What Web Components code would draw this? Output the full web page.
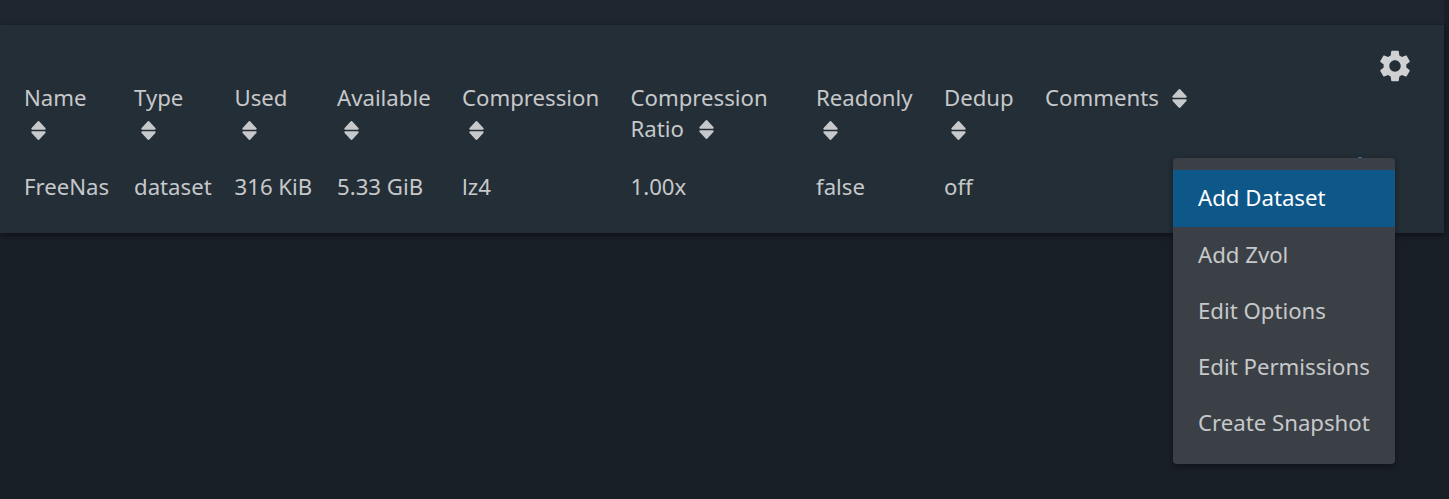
<!DOCTYPE html>
<html>
<head>
<meta charset="utf-8">
<title>Datasets</title>
<style>
  html, body {
    margin: 0;
    height: 100%;
    overflow: hidden;
    background: #181f27;
  }
</style>
</head>
<body>
<dataset-page>
  <dataset-table>
    <sort-head break>Name</sort-head>
    <sort-head break>Type</sort-head>
    <sort-head break>Used</sort-head>
    <sort-head break>Available</sort-head>
    <sort-head break>Compression</sort-head>
    <sort-head wide>Compression<br>Ratio</sort-head>
    <sort-head break>Readonly</sort-head>
    <sort-head break>Dedup</sort-head>
    <sort-head>Comments</sort-head>
    <settings-button></settings-button>

    <span slot="row">FreeNas</span>
    <span slot="row">dataset</span>
    <span slot="row">316 KiB</span>
    <span slot="row">5.33 GiB</span>
    <span slot="row">lz4</span>
    <span slot="row">1.00x</span>
    <span slot="row">false</span>
    <span slot="row">off</span>

    <action-menu slot="overlay">
      <menu-item active>Add Dataset</menu-item>
      <menu-item>Add Zvol</menu-item>
      <menu-item>Edit Options</menu-item>
      <menu-item>Edit Permissions</menu-item>
      <menu-item>Create Snapshot</menu-item>
    </action-menu>
  </dataset-table>
</dataset-page>

<script>
const FONT = '"Noto Sans", "Liberation Sans", sans-serif'

customElements.define('dataset-page',
  /**
   * The page background with the strip above the card.
   */
  class extends HTMLElement {
    constructor () {
      super()
      this.attachShadow({ mode: 'open' }).innerHTML = `
        <style>
          :host {
            display: block;
            font: 22.2px/31.5px ${FONT};
            color: #c6c8ca;
          }
          #strip {
            height: 25px;
            width: 1444px;
            background: #1f262f;
          }
        </style>
        <div id="strip"></div>
        <slot></slot>
      `
    }
  }
)

customElements.define('dataset-table',
  /**
   * The card holding header cells, the data row and the open menu.
   */
  class extends HTMLElement {
    constructor () {
      super()
      this.attachShadow({ mode: 'open' }).innerHTML = `
        <style>
          :host {
            display: block;
            position: relative;
            box-sizing: border-box;
            width: 1444px;
            height: 208px;
            padding-left: 12px;
            background: #242e37;
            box-shadow: 0 2px 6px rgba(0, 0, 0, 0.45);
          }
          .grid {
            display: grid;
            grid-template-columns: 110px 100.5px 102.5px 125px 168.5px 185.5px 128px 101px 1fr auto;
          }
          #head {
            height: 120px;
          }
          #body {
            padding-top: 26px;
          }
          ::slotted(span) {
            padding-left: 12px;
          }
        </style>
        <div id="head" class="grid"><slot></slot></div>
        <div id="body" class="grid"><slot name="row"></slot></div>
        <slot name="overlay"></slot>
      `
    }
  }
)

customElements.define('sort-head',
  /**
   * A column title with its sort arrows.
   */
  class extends HTMLElement {
    constructor () {
      super()
      this.attachShadow({ mode: 'open' }).innerHTML = `
        <style>
          :host {
            display: block;
            box-sizing: border-box;
            padding: 57px 0 0 12px;
            line-height: 31px;
          }
          svg {
            width: 15px;
            height: 19px;
            margin-left: 7px;
            vertical-align: -2px;
            fill: #c6c8ca;
          }
          :host([wide]) svg {
            margin-left: 9px;
          }
          :host([break]) svg {
            display: block;
            margin-top: 8px;
          }
        </style>
        <slot></slot>
        <svg viewBox="0 0 15 19" aria-hidden="true">
          <path d="M6.6 .5a1.2 1.2 0 0 1 1.8 0l6 6.6c.6.7.2 1.6-.7 1.6H1.3c-.9 0-1.3-.9-.7-1.6z"/>
          <path d="M6.6 18.5a1.2 1.2 0 0 0 1.8 0l6-6.6c.6-.7.2-1.6-.7-1.6H1.3c-.9 0-1.3.9-.7 1.6z"/>
        </svg>
      `
    }
  }
)

customElements.define('settings-button',
  /**
   * The gear in the top right corner of the card.
   */
  class extends HTMLElement {
    constructor () {
      super()
      this.attachShadow({ mode: 'open' }).innerHTML = `
        <style>
          :host {
            display: block;
            padding: 22px 30px 0 0;
          }
          svg {
            display: block;
            width: 38px;
            height: 38px;
            fill: #d0d1d2;
          }
        </style>
        <svg viewBox="0 0 24 24" aria-hidden="true">
          <path d="M19.14 12.94c.04-.3.06-.61.06-.94 0-.32-.02-.64-.07-.94l2.03-1.58c.18-.14.23-.41.12-.61l-1.92-3.32c-.12-.22-.37-.29-.59-.22l-2.39.96c-.5-.38-1.03-.7-1.62-.94l-.36-2.54c-.04-.24-.24-.41-.48-.41h-3.84c-.24 0-.43.17-.47.41l-.36 2.54c-.59.24-1.13.57-1.62.94l-2.39-.96c-.22-.08-.47 0-.59.22L2.74 8.87c-.12.21-.08.47.12.61l2.03 1.58c-.05.3-.09.63-.09.94s.02.64.07.94l-2.03 1.58c-.18.14-.23.41-.12.61l1.92 3.32c.12.22.37.29.59.22l2.39-.96c.5.38 1.03.7 1.62.94l.36 2.54c.05.24.24.41.48.41h3.84c.24 0 .44-.17.47-.41l.36-2.54c.59-.24 1.13-.56 1.62-.94l2.39.96c.22.08.47 0 .59-.22l1.92-3.32c.12-.22.07-.47-.12-.61l-2.01-1.58zM12 15.6c-1.98 0-3.6-1.62-3.6-3.6s1.62-3.6 3.6-3.6 3.6 1.62 3.6 3.6-1.62 3.6-3.6 3.6z"/>
        </svg>
      `
    }
  }
)

customElements.define('action-menu',
  /**
   * The dropdown that lies over the card.
   */
  class extends HTMLElement {
    constructor () {
      super()
      this.attachShadow({ mode: 'open' }).innerHTML = `
        <style>
          :host {
            position: absolute;
            left: 1173px;
            top: 133px;
            width: 222px;
            padding: 12px 0 13px;
            border-radius: 4px;
            background: #3b4046;
            box-shadow: 0 2px 6px rgba(0, 0, 0, 0.4);
          }
          #peek {
            position: absolute;
            top: -1px;
            left: 185px;
            width: 4px;
            height: 1px;
            background: #2a6fb0;
          }
        </style>
        <div id="peek"></div>
        <slot></slot>
      `
    }
  }
)

customElements.define('menu-item',
  /**
   * One entry of the dropdown.
   */
  class extends HTMLElement {
    constructor () {
      super()
      this.attachShadow({ mode: 'open' }).innerHTML = `
        <style>
          :host {
            display: block;
            padding: 12px 25px;
            line-height: 32px;
          }
          :host([active]) {
            padding-bottom: 13px;
            background: #0e5789;
            color: #fff;
          }
        </style>
        <slot></slot>
      `
    }
  }
)
</script>
</body>
</html>
